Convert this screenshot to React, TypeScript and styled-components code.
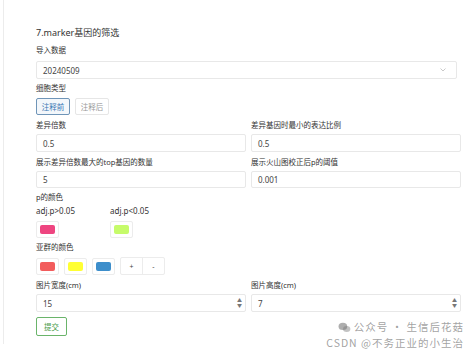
import React from "react";
import styled, { createGlobalStyle } from "styled-components";

const GlobalStyle = createGlobalStyle`
  html, body {
    margin: 0;
    padding: 0;
    background: #fff;
  }
  body {
    font-family: "Noto Sans", "Noto Sans CJK SC", sans-serif;
    color: #333;
  }
`;

const Page = styled.div`
  position: relative;
  width: 474px;
  height: 351px;
  overflow: hidden;
`;

const Panel = styled.div`
  margin-left: 3px;
  height: 344px;
  border-left: 1px solid #ececec;
  padding: 27px 13px 0 32px;
  box-sizing: border-box;
  display: flex;
  flex-direction: column;
`;

const Title = styled.div`
  font-size: 9px;
  line-height: 12px;
  color: #333;
  margin-bottom: 5px;
`;

const Label = styled.div<{ $gap?: number }>`
  font-size: 7.5px;
  line-height: 12px;
  color: #333;
  margin-bottom: ${(p) => p.$gap ?? 3}px;
  white-space: nowrap;
`;

const Field = styled.div<{ $after?: number }>`
  display: flex;
  flex-direction: column;
  margin-bottom: ${(p) => p.$after ?? 4}px;
`;

const TwoCols = styled.div`
  display: grid;
  grid-template-columns: 210px 210px;
  column-gap: 5px;
`;

const Box = styled.div<{ $h?: number }>`
  height: ${(p) => p.$h ?? 18}px;
  border: 1px solid #e8e8e8;
  border-radius: 2px;
  box-sizing: border-box;
  display: flex;
  align-items: center;
  padding: 0 6px;
  font-size: 8px;
  color: #444;
  background: #fff;
`;

const SelectBox = styled(Box)`
  margin-right: 4px;
  justify-content: space-between;
`;

const Chevron = styled.svg`
  width: 6px;
  height: 4px;
  margin-right: 4px;
`;

const Spinner = styled.div`
  margin-left: auto;
  margin-right: -3px;
  display: flex;
  flex-direction: column;
  align-items: center;
  font-size: 5px;
  line-height: 5px;
  color: #777;
`;

const Segmented = styled.div`
  display: flex;
  gap: 5px;
`;

const SegButton = styled.div<{ $active?: boolean }>`
  width: 34px;
  height: 17px;
  box-sizing: border-box;
  border: 1px solid ${(p) => (p.$active ? "#6f95b8" : "#e6e6e6")};
  background: ${(p) => (p.$active ? "#f3f7fb" : "#fff")};
  color: ${(p) => (p.$active ? "#3b78b4" : "#999")};
  border-radius: 2px;
  font-size: 7.5px;
  display: flex;
  align-items: center;
  justify-content: center;
`;

const PColors = styled.div`
  display: grid;
  grid-template-columns: 74px 74px;
  row-gap: 2px;
`;

const SmallText = styled.div`
  font-size: 8px;
  line-height: 12px;
  color: #333;
`;

const Swatch = styled.div<{ $color: string }>`
  width: 23px;
  height: 17px;
  box-sizing: border-box;
  border: 1px solid #ececec;
  border-radius: 2px;
  display: flex;
  align-items: center;
  justify-content: center;
  &::after {
    content: "";
    width: 15px;
    height: 9px;
    border-radius: 2px;
    background: ${(p) => p.$color};
  }
`;

const SwatchRow = styled.div`
  display: flex;
  gap: 5px;
  align-items: center;
`;

const PlusMinus = styled.div`
  display: flex;
  height: 18px;
  border: 1px solid #ececec;
  border-radius: 2px;
  box-sizing: border-box;
`;

const PMButton = styled.div<{ $divider?: boolean }>`
  width: 21px;
  display: flex;
  align-items: center;
  justify-content: center;
  font-size: 7px;
  color: #444;
  border-left: ${(p) => (p.$divider ? "1px solid #ececec" : "none")};
`;

const Submit = styled.div`
  width: 31px;
  height: 19px;
  box-sizing: border-box;
  border: 1px solid #6ab46a;
  border-radius: 2px;
  color: #4a9d4a;
  font-size: 7.5px;
  display: flex;
  align-items: center;
  justify-content: center;
  margin-top: 1px;
`;

const Watermark = styled.div`
  position: absolute;
  right: 10px;
  bottom: 0;
  display: flex;
  flex-direction: column;
  align-items: flex-end;
  color: rgba(120, 120, 120, 0.7);
  font-family: "Noto Sans CJK SC", sans-serif;
  font-size: 10.5px;
  line-height: 16px;
  pointer-events: none;
`;

const WmLine = styled.div`
  display: flex;
  align-items: center;
  gap: 3px;
  height: 16px;
  letter-spacing: 1px;
`;

const WmIcon = styled.svg`
  width: 13px;
  height: 11px;
`;

const NumberField = ({ value }: { value: string }) => (
  <Box $h={18}>
    {value}
    <Spinner>
      <span>▲</span>
      <span>▼</span>
    </Spinner>
  </Box>
);

export default function App() {
  return (
    <Page>
      <GlobalStyle />
      <Panel>
        <Title>7.marker基因的筛选</Title>

        <Field $after={3}>
          <Label $gap={5}>导入数据</Label>
          <SelectBox>
            20240509
            <Chevron viewBox="0 0 6 4">
              <path d="M0.5 0.5 L3 3 L5.5 0.5" fill="none" stroke="#bbb" strokeWidth="0.8" />
            </Chevron>
          </SelectBox>
        </Field>

        <Field>
          <Label $gap={4}>细胞类型</Label>
          <Segmented>
            <SegButton $active>注释前</SegButton>
            <SegButton>注释后</SegButton>
          </Segmented>
        </Field>

        <TwoCols>
          <Field>
            <Label>差异倍数</Label>
            <Box>0.5</Box>
          </Field>
          <Field>
            <Label>差异基因时最小的表达比例</Label>
            <Box>0.5</Box>
          </Field>
          <Field $after={3}>
            <Label>展示差异倍数最大的top基因的数量</Label>
            <Box $h={17}>5</Box>
          </Field>
          <Field $after={3}>
            <Label>展示火山图校正后p的阈值</Label>
            <Box $h={17}>0.001</Box>
          </Field>
        </TwoCols>

        <Field $after={3}>
          <Label $gap={2}>p的颜色</Label>
          <PColors>
            <SmallText>adj.p&gt;0.05</SmallText>
            <SmallText>adj.p&lt;0.05</SmallText>
            <Swatch $color="#ee4580" style={{ marginTop: 2 }} />
            <Swatch $color="#c6fb6a" style={{ marginTop: 2 }} />
          </PColors>
        </Field>

        <Field>
          <Label $gap={4}>亚群的颜色</Label>
          <SwatchRow>
            <Swatch $color="#f25c5c" />
            <Swatch $color="#ffff33" />
            <Swatch $color="#3d8ecb" />
            <PlusMinus>
              <PMButton>+</PMButton>
              <PMButton $divider>-</PMButton>
            </PlusMinus>
          </SwatchRow>
        </Field>

        <TwoCols>
          <Field>
            <Label>图片宽度(cm)</Label>
            <NumberField value="15" />
          </Field>
          <Field>
            <Label>图片高度(cm)</Label>
            <NumberField value="7" />
          </Field>
        </TwoCols>

        <Submit>提交</Submit>
      </Panel>

      <Watermark>
        <WmLine>
          <WmIcon viewBox="0 0 12 10">
            <ellipse cx="4.5" cy="4" rx="4" ry="3.3" fill="rgba(120,120,120,0.6)" />
            <ellipse cx="8" cy="6.3" rx="3.4" ry="2.8" fill="rgba(120,120,120,0.45)" />
          </WmIcon>
          公众号 · 生信后花菇
        </WmLine>
        <WmLine>CSDN @不务正业的小生治</WmLine>
      </Watermark>
    </Page>
  );
}
